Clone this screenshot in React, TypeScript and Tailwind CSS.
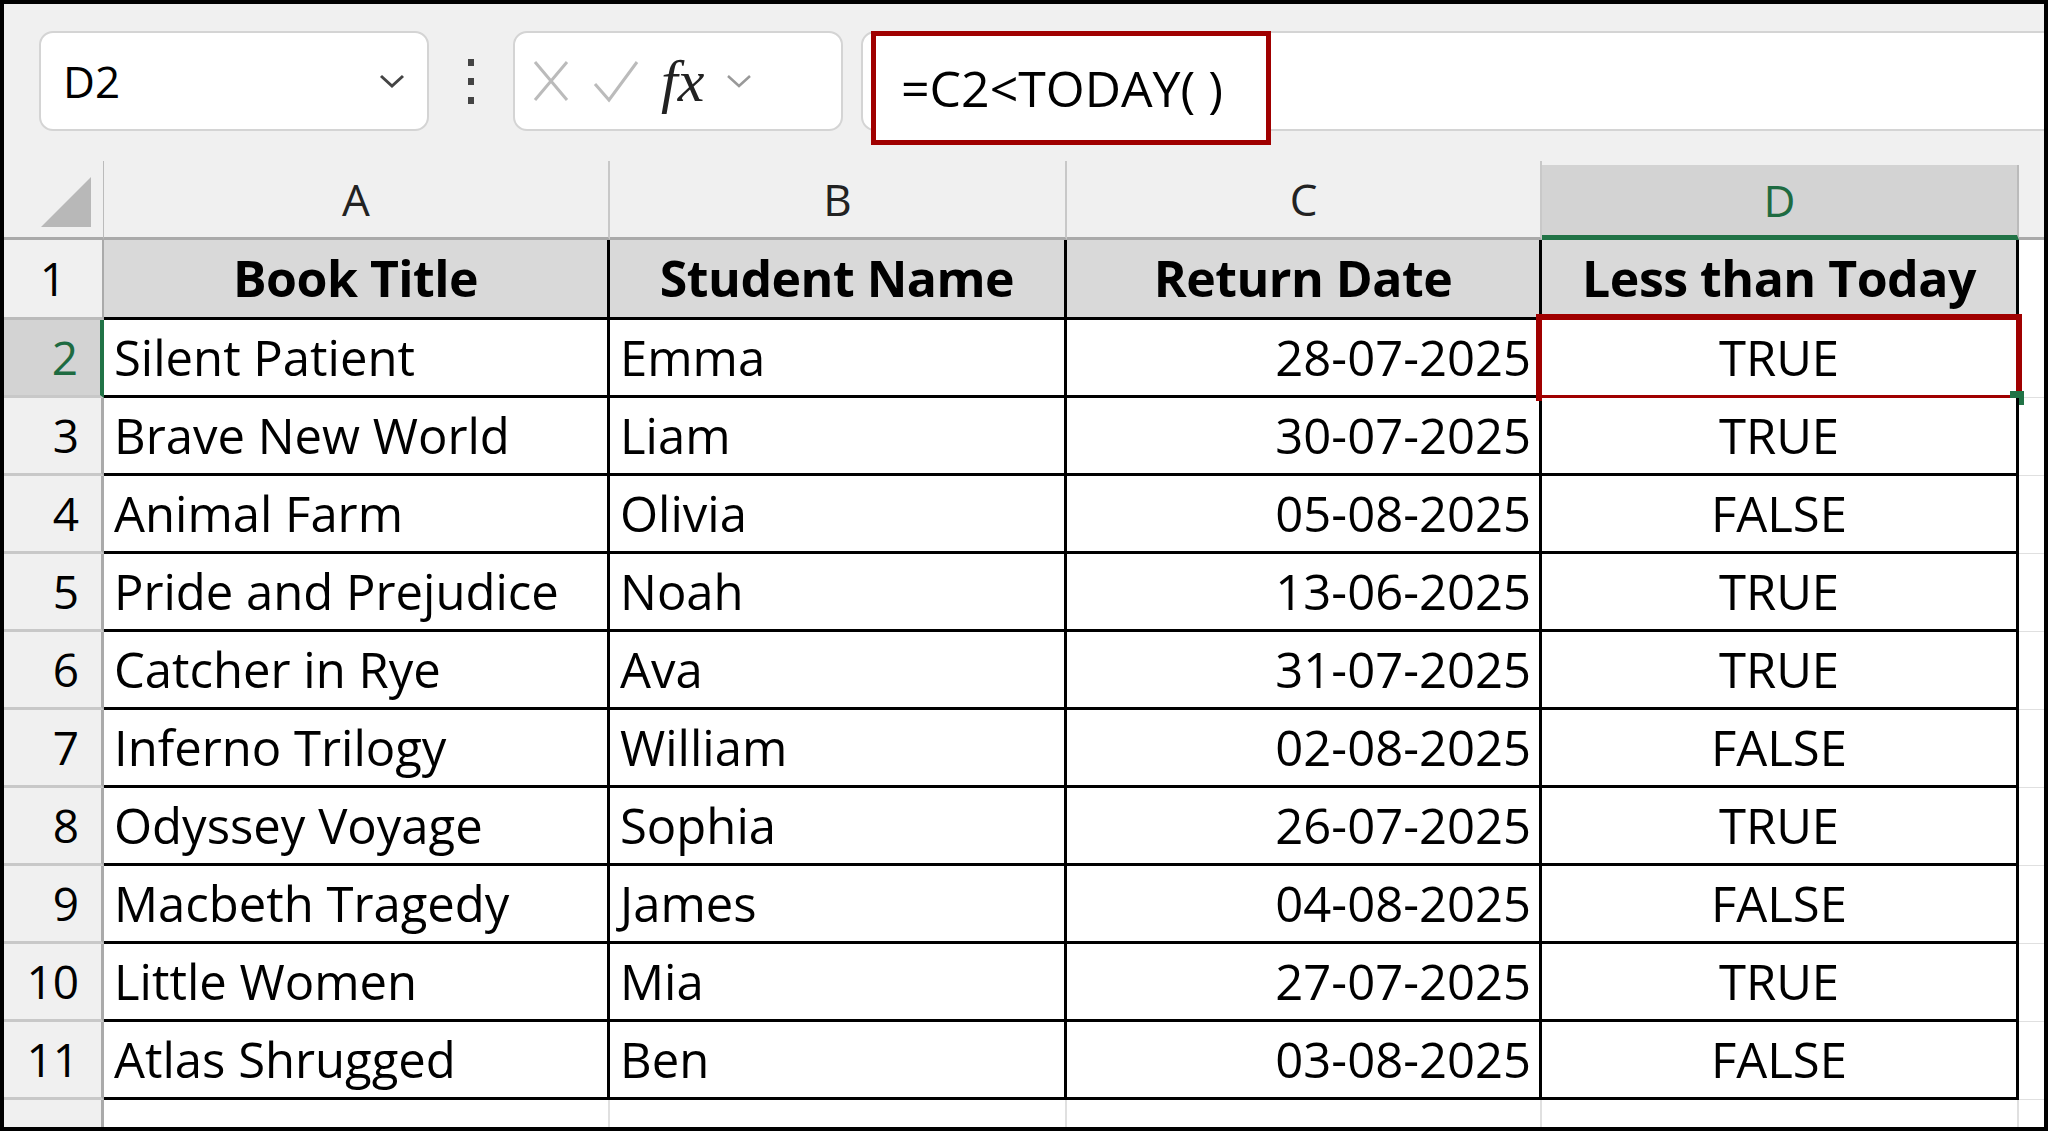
import React from "react";

const rows: [string, string, string, string][] = [
  ["Silent Patient", "Emma", "28-07-2025", "TRUE"],
  ["Brave New World", "Liam", "30-07-2025", "TRUE"],
  ["Animal Farm", "Olivia", "05-08-2025", "FALSE"],
  ["Pride and Prejudice", "Noah", "13-06-2025", "TRUE"],
  ["Catcher in Rye", "Ava", "31-07-2025", "TRUE"],
  ["Inferno Trilogy", "William", "02-08-2025", "FALSE"],
  ["Odyssey Voyage", "Sophia", "26-07-2025", "TRUE"],
  ["Macbeth Tragedy", "James", "04-08-2025", "FALSE"],
  ["Little Women", "Mia", "27-07-2025", "TRUE"],
  ["Atlas Shrugged", "Ben", "03-08-2025", "FALSE"],
];

const cols = "grid-cols-[100px_506px_457px_475px_477px_1fr]";

export default function App() {
  return (
    <div className="w-[2048px] h-[1131px] bg-black p-[4px] overflow-hidden" style={{ fontFamily: '"Open Sans", "Noto Sans", sans-serif' }}>
      <div className="w-full h-full bg-[#f0f0f0] flex flex-col overflow-hidden">
        {/* formula bar */}
        <div className="h-[157px] flex items-start pt-[27px] pl-[35px] gap-0 shrink-0">
          <div className="w-[390px] h-[100px] bg-white border-2 border-[#d4d4d4] rounded-[14px] flex items-center justify-between pl-[22px] pr-[20px] text-[44px] text-black">
            <span>D2</span>
            <svg width="30" height="20" viewBox="0 0 30 20"><path d="M4 5 L15 15 L26 5" stroke="#444" strokeWidth="3" fill="none" /></svg>
          </div>
          <div className="w-[84px] h-[100px] flex flex-col items-center justify-center gap-[12px]">
            <div className="w-[6px] h-[7px] bg-[#444]" />
            <div className="w-[6px] h-[7px] bg-[#444]" />
            <div className="w-[6px] h-[7px] bg-[#444]" />
          </div>
          <div className="w-[330px] h-[100px] bg-white border-2 border-[#d4d4d4] rounded-[14px] flex items-center pl-[16px] gap-[20px]">
            <svg width="40" height="46" viewBox="0 0 40 46"><path d="M4 4 L36 42 M36 4 L4 42" stroke="#bbb" strokeWidth="3" fill="none" /></svg>
            <svg width="50" height="46" viewBox="0 0 50 46"><path d="M4 26 L18 42 L46 4" stroke="#bbb" strokeWidth="3" fill="none" /></svg>
            <span className="text-[60px] italic text-[#222] leading-none" style={{ fontFamily: '"Liberation Serif", serif' }}>fx</span>
            <svg width="30" height="20" viewBox="0 0 30 20"><path d="M4 5 L15 15 L26 5" stroke="#999" strokeWidth="2.5" fill="none" /></svg>
          </div>
          <div className="ml-[18px] h-[100px] flex-1 bg-white border-2 border-[#d4d4d4] rounded-l-[14px] -mr-[4px] relative">
            <div className="absolute left-[8px] -top-[2px] w-[400px] h-[114px] border-[5px] border-[#a00000] flex items-center pl-[25px] text-[50px] text-black bg-white whitespace-nowrap">
              =C2&lt;TODAY( )
            </div>
          </div>
        </div>
        {/* grid */}
        <div className={`grid ${cols} h-[79px] shrink-0 text-[44px] text-[#222]`}>
          <div className="relative border-r border-[#bbb] border-b-[3px] border-b-[#aaa]">
            <svg className="absolute right-[12px] bottom-[10px]" width="50" height="50" viewBox="0 0 50 50"><path d="M50 0 L50 50 L0 50 Z" fill="#b8b8b8" /></svg>
          </div>
          {["A", "B", "C"].map((c) => (
            <div key={c} className="flex items-center justify-center border-r-2 border-[#c8c8c8] border-b-[3px] border-b-[#aaa]">{c}</div>
          ))}
          <div className="flex items-center justify-center bg-[#d3d3d3] text-[#1e6b41] border-r-2 border-[#bbb] border-b-[5px] border-b-[#217346] mt-[4px]">D</div>
          <div className="border-b-[3px] border-b-[#aaa]" />
        </div>
        <div className={`grid ${cols} h-[80px] shrink-0 text-[50px] font-bold text-black`}>
          <div className="flex items-center justify-center font-normal text-[46px] border-r-2 border-[#aaa] border-b-[3px] border-b-[#bbb]">1</div>
          {["Book Title", "Student Name", "Return Date", "Less than Today"].map((h) => (
            <div key={h} className="flex items-center justify-center bg-[#d9d9d9] border-r-[3px] border-black border-b-[3px] whitespace-nowrap tracking-[-0.5px]">{h}</div>
          ))}
          <div className="bg-white" />
        </div>
        {rows.map((r, i) => (
          <div key={i} className={`grid ${cols} h-[78px] shrink-0 text-[49px] text-black`}>
            <div className={`flex items-center justify-end pr-[22px] text-[46px] border-r-[3px] border-b-[3px] border-b-[#c8c8c8] ${i === 0 ? "bg-[#d3d3d3] text-[#1e6b41] border-r-[#217346] border-r-[4px]" : "border-r-[#aaa]"}`}>{i + 2}</div>
            <div className="flex items-center pl-[10px] bg-white border-r-[3px] border-b-[3px] border-black whitespace-nowrap">{r[0]}</div>
            <div className="flex items-center pl-[10px] bg-white border-r-[3px] border-b-[3px] border-black">{r[1]}</div>
            <div className="flex items-center justify-end pr-[8px] bg-white border-r-[3px] border-b-[3px] border-black">{r[2]}</div>
            <div className="relative flex items-center justify-center bg-white border-r-[3px] border-b-[3px] border-black">
              {r[3]}
              {i === 0 && (
                <>
                  <div className="absolute -left-[6px] -top-[6px] -right-[6px] -bottom-[6px] border-[6px] border-[#a00000]" />
                  <div className="absolute -right-[8px] -bottom-[10px] w-[14px] h-[14px] bg-[#217346]" />
                </>
              )}
            </div>
            <div className="bg-white border-b border-[#e0e0e0]" />
          </div>
        ))}
        <div className={`grid ${cols} flex-1 text-[46px]`}>
          <div className="border-r-[3px] border-[#aaa] flex justify-end pr-[22px] pt-[10px] text-black">12</div>
          <div className="bg-white border-r-2 border-[#e0e0e0]" />
          <div className="bg-white border-r-2 border-[#e0e0e0]" />
          <div className="bg-white border-r-2 border-[#e0e0e0]" />
          <div className="bg-white border-r-2 border-[#e0e0e0]" />
          <div className="bg-white" />
        </div>
      </div>
    </div>
  );
}
